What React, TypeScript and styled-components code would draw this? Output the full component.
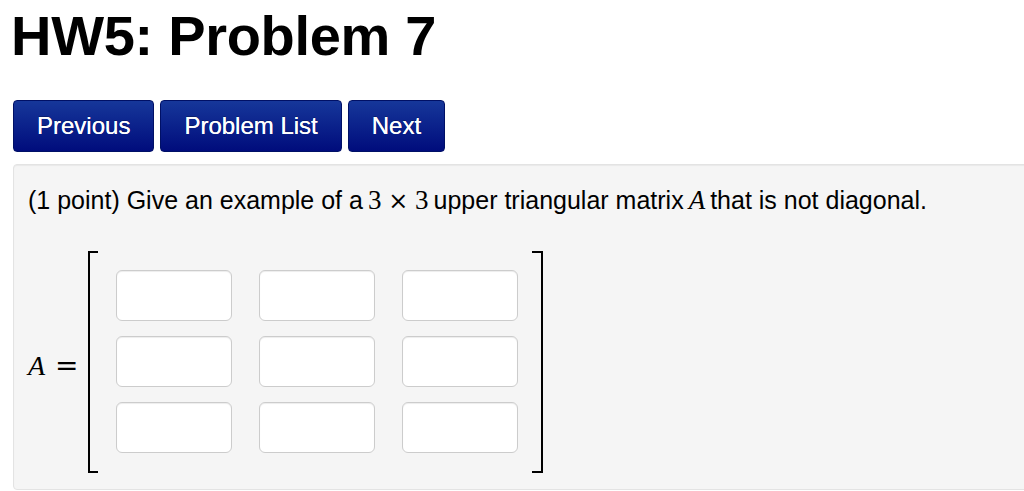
import React from 'react';
import styled, { createGlobalStyle } from 'styled-components';

const GlobalStyle = createGlobalStyle`
  html, body {
    margin: 0;
    padding: 0;
    background: #fff;
    overflow: hidden;
  }
  body {
    font-family: 'Liberation Sans', Arial, Helvetica, sans-serif;
    color: #000;
  }
`;

const Page = styled.div`
  width: 1060px;
  padding-left: 13px;
`;

const Title = styled.h1`
  margin: 0 0 0 -2px;
  padding-top: 5px;
  font-size: 56px;
  line-height: 62px;
  font-weight: bold;
  letter-spacing: -0.3px;
`;

const Nav = styled.div`
  display: flex;
  gap: 6px;
  margin-top: 33px;
`;

const NavButton = styled.button`
  height: 52px;
  padding: 0 23px;
  font-family: 'Liberation Sans', Arial, sans-serif;
  font-size: 24px;
  color: #fff;
  background: linear-gradient(to bottom, #16379a, #000c7c);
  border: 1px solid #001066;
  border-radius: 4px;
  text-shadow: 0 0 0.4px #fff, 0 -1px 0 rgba(0, 0, 0, 0.25);
  cursor: pointer;
`;

const Well = styled.div`
  box-sizing: border-box;
  margin-top: 12px;
  height: 326px;
  padding: 21px 14px 15px;
  background: #f5f5f5;
  border: 1px solid #e3e3e3;
  border-radius: 4px;
  box-shadow: inset 0 1px 1px rgba(0, 0, 0, 0.05);
`;

const Question = styled.p`
  margin: 0;
  font-size: 25px;
  line-height: 28px;
  white-space: nowrap;
`;

const MathInline = styled.span<{ $italic?: boolean }>`
  font-family: 'Liberation Serif', 'Times New Roman', serif;
  font-size: 27px;
  font-style: ${(p) => (p.$italic ? 'italic' : 'normal')};
  margin: 0 5px;
`;

const MathOp = styled.span<{ $size: number }>`
  font-family: 'DejaVu Serif', serif;
  font-size: ${(p) => p.$size}px;
  line-height: 1;
  font-style: normal;
`;

const MatrixRow = styled.div`
  display: flex;
  align-items: stretch;
  margin-top: 37px;
`;

const MatrixLabel = styled.div`
  display: flex;
  align-items: center;
  gap: 10px;
  margin-right: 9px;
  padding-top: 8px;
  font-family: 'Liberation Serif', 'Times New Roman', serif;
  font-size: 28px;
  line-height: 28px;
`;

const Var = styled.span`
  font-style: italic;
`;

const Bracket = styled.div<{ $side: 'left' | 'right' }>`
  box-sizing: border-box;
  width: ${(p) => (p.$side === 'left' ? '10px' : '11px')};
  border: 2px solid #000;
  ${(p) => (p.$side === 'left' ? 'border-right: none;' : 'border-left: none;')}
`;

const Grid = styled.div`
  display: grid;
  grid-template-columns: repeat(3, 116px);
  column-gap: 27px;
  row-gap: 15px;
  padding: 19px 0 20px;
  margin: 0 14px 0 18px;
`;

const Cell = styled.input`
  box-sizing: border-box;
  width: 116px;
  height: 51px;
  margin: 0;
  background: #fff;
  border: 1px solid #cccccc;
  border-radius: 6px;
  box-shadow: inset 0 1px 1px rgba(0, 0, 0, 0.075);
  font-size: 20px;
  outline: none;
`;

const cells = Array.from({ length: 9 }, (_, i) => i);

const App: React.FC = () => (
  <Page>
    <GlobalStyle />
    <Title>HW5: Problem 7</Title>
    <Nav>
      <NavButton>Previous</NavButton>
      <NavButton>Problem List</NavButton>
      <NavButton>Next</NavButton>
    </Nav>
    <Well>
      <Question>
        (1 point) Give an example of a
        <MathInline>
          3 <MathOp $size={24}>×</MathOp> 3
        </MathInline>
        upper triangular matrix<MathInline $italic>A</MathInline>that is not
        diagonal.
      </Question>
      <MatrixRow>
        <MatrixLabel>
          <Var>A</Var>
          <MathOp $size={28}>=</MathOp>
        </MatrixLabel>
        <Bracket $side="left" />
        <Grid>
          {cells.map((i) => (
            <Cell key={i} type="text" aria-label={`entry ${i + 1}`} />
          ))}
        </Grid>
        <Bracket $side="right" />
      </MatrixRow>
    </Well>
  </Page>
);

export default App;
